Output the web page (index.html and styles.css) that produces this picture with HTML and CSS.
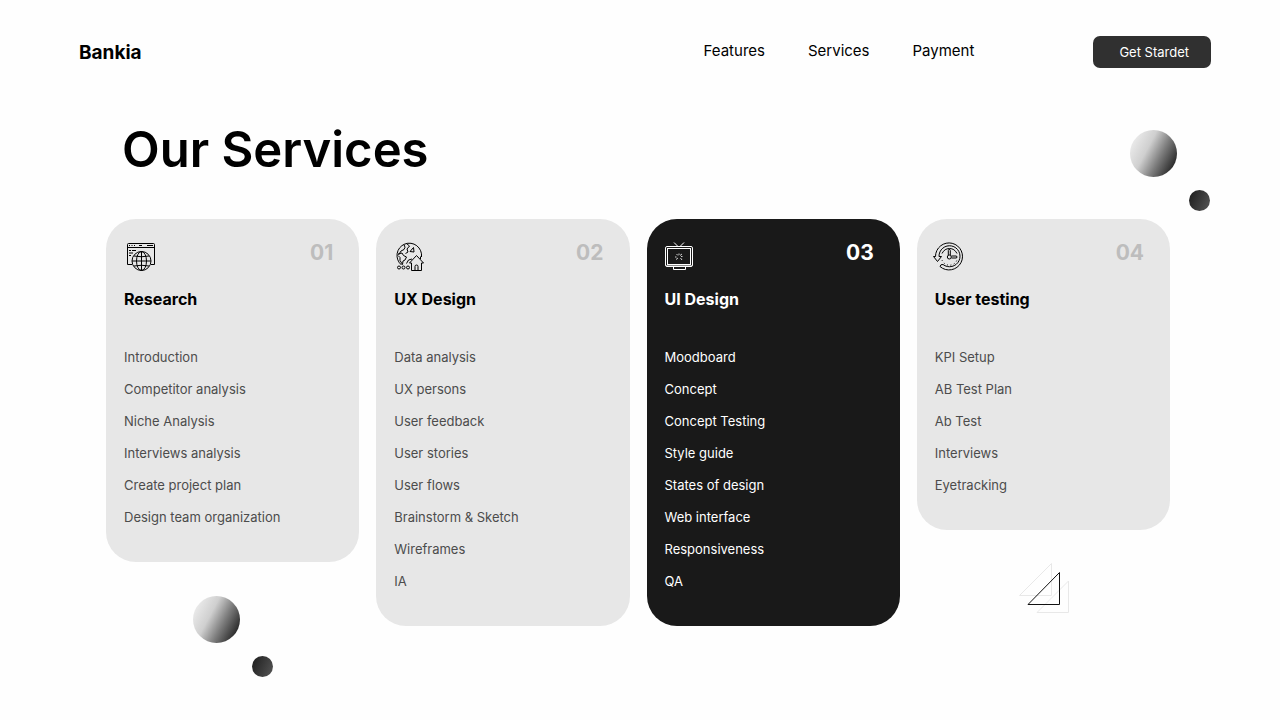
FILE: index.html
```html
<!DOCTYPE html>
<html lang="en">
<head>
<meta charset="utf-8">
<meta name="viewport" content="width=device-width, initial-scale=1">
<title>Bankia – Our Services</title>
<link rel="stylesheet" href="styles.css">
</head>
<body>
<header class="header">
  <a class="logo" href="#">Bankia</a>
  <nav class="nav">
    <a href="#">Features</a>
    <a href="#">Services</a>
    <a href="#">Payment</a>
  </nav>
  <button class="cta" type="button">Get Stardet</button>
</header>
<main class="main">
  <h1 class="title">Our Services</h1>
  <div class="cards">
    <section class="card">
      <div class="card-top">
        <svg class="icon" viewBox="0 0 34 32" aria-hidden="true">
          <path d="M8 23.500H3.500V3.500q0-1 1-1h25q1 0 1 1V23.500H27M3.500 6.500h27"/>
          <path d="M5 4.500h1M7.500 4.500h1M10 4.500h1M15 4.500h3M23 4.500h6M5 9.500h2M8 9.500h4M5 12h4M5 14.500h2"/>
          <circle cx="17.500" cy="20" r="9.500"/>
          <ellipse cx="17.500" cy="20" rx="5" ry="9.500"/>
          <path d="M17.500 10.500v19M8 20h19M10 15q7.500 1.500 15 0M10 25q7.500-1.500 15 0"/>
        </svg>
        <span class="num">01</span>
      </div>
      <h2 class="name">Research</h2>
      <ul class="list"><li>Introduction</li><li>Competitor analysis</li><li>Niche Analysis</li><li>Interviews analysis</li><li>Create project plan</li><li>Design team organization</li></ul>
    </section>
    <section class="card">
      <div class="card-top">
        <svg class="icon" viewBox="0 0 34 32" aria-hidden="true">
          <path d="M7.500 24A12.300 12.300 0 1 1 27.500 16"/>
          <path d="M10 3.500q2 3 0 5l-3 1.500-2.500 4M12.500 2.500l3 2.500-2.500 3 1 3-2.500 1.500M4 13l4-1 1.500 2.500 3 1.500-1.500 3-2 1-.500 3.500-2.500-4v-3l-2-2M16 10.500l3.500-4 .500 4.500z"/>
          <path d="M12.500 22.500l2-3.500 3.500-1"/>
          <circle cx="5" cy="26.500" r="1.500"/><circle cx="9.500" cy="26.500" r="1.500"/><circle cx="14" cy="26.500" r="1.500"/>
          <path class="house" d="M15.500 22l7-7.500 7 7.500h-2v7.500h-10V22z"/>
          <path d="M21 29.500v-4q0-1.500 1.500-1.500t1.500 1.500v4M26.500 18v-2.500"/>
        </svg>
        <span class="num">02</span>
      </div>
      <h2 class="name">UX Design</h2>
      <ul class="list"><li>Data analysis</li><li>UX persons</li><li>User feedback</li><li>User stories</li><li>User flows</li><li>Brainstorm &amp; Sketch</li><li>Wireframes</li><li>IA</li></ul>
    </section>
    <section class="card card-dark">
      <div class="card-top">
        <svg class="icon" viewBox="0 0 34 32" aria-hidden="true">
          <rect x="0.500" y="5.500" width="27" height="20" rx="1.500"/>
          <rect x="2.500" y="7.500" width="23" height="16"/>
          <path d="M9 1.500l4 4M19 1.500l-4 4M8.500 26v2.500h12V26"/>
          <path d="M1 24.500h26" opacity=".5"/>
          <path d="M11.500 13l1.500 1.500M14 12.500v1.500M17 13l-2 1.500M11 18.500l2-1.500M17 19l-1.500-2M10 16h1.500M16 15.500h1.500" opacity=".8"/>
        </svg>
        <span class="num">03</span>
      </div>
      <h2 class="name">UI Design</h2>
      <ul class="list"><li>Moodboard</li><li>Concept</li><li>Concept Testing</li><li>Style guide</li><li>States of design</li><li>Web interface</li><li>Responsiveness</li><li>QA</li></ul>
    </section>
    <section class="card">
      <div class="card-top">
        <svg class="icon" viewBox="0 0 34 32" aria-hidden="true">
          <path d="M.500 15.500A13.500 13.500 0 1 1 5 25.500q.500-2.500 3-2a10.500 10.500 0 1 0-4-8h2.500l-4 5-4-5z"/>
          <path d="M7 19a8 8 0 0 0 15 0" stroke-dasharray="1 2.500"/>
          <path d="M7 12.500q2.500-5 7.500-5t7.500 5"/>
          <circle cx="14.300" cy="16" r="2"/>
          <path d="M13.300 14V9.500l1-1.500 1 1.500V14M16.500 15h5q1 1 0 2h-5"/>
        </svg>
        <span class="num">04</span>
      </div>
      <h2 class="name">User testing</h2>
      <ul class="list"><li>KPI Setup</li><li>AB Test Plan</li><li>Ab Test</li><li>Interviews</li><li>Eyetracking</li></ul>
    </section>
  </div>
</main>
<div class="orbs orbs-top"></div>
<div class="orbs orbs-bottom"></div>
<svg class="triangles" viewBox="0 0 50 50" aria-hidden="true">
  <path class="faint" d="M32.500.500v32H.500zM49.500 18v31.500H18z"/>
  <path class="solid" d="M40.500 9.500v32H9z"/>
</svg>
</body>
</html>
```

FILE: styles.css
```css
* { box-sizing: border-box; }
body {
  position: relative;
  min-height: 100vh;
  margin: 0;
  background: #fefefe;
  color: #000;
  font-family: Inter, "Liberation Sans", sans-serif;
}
a { color: inherit; text-decoration: none; }
.header {
  display: flex;
  align-items: center;
  padding: 36px 69px 0 79px;
}
.logo { margin-right: auto; font-size: 19px; font-weight: 700; }
.nav {
  display: flex;
  gap: 43px;
  margin-right: 119px;
  font-size: 15px;
  line-height: 18px;
  padding-bottom: 2px;
}
.cta {
  height: 32px;
  padding: 0 22px 0 26px;
  border: 0;
  border-radius: 7px;
  background: #303030;
  color: #fff;
  font: 13px Inter, "Liberation Sans", sans-serif;
}
.main { padding: 50px 110px 60px 106px; }
.title {
  margin: 0 0 37px 16px;
  font-size: 49px;
  line-height: 64px;
  font-weight: 600;
}
.cards {
  display: grid;
  grid-template-columns: repeat(4, 1fr);
  gap: 17px;
  align-items: start;
}
.card {
  padding: 22px 18px 29px;
  border-radius: 30px;
  background: #e7e7e7;
}
.card-dark { background: #191919; color: #fff; }
.card-top { display: flex; justify-content: space-between; }
.icon {
  width: 34px;
  height: 32px;
  overflow: visible;
  fill: none;
  stroke: currentColor;
  stroke-width: 1;
}
.house { fill: #e7e7e7; }
.num {
  margin-right: 8px;
  color: #bdbdbd;
  font-size: 21px;
  line-height: 24px;
  font-weight: 700;
}
.card-dark .num { color: #fff; }
.name { margin: 16px 0 32px; font-size: 16px; line-height: 20px; font-weight: 700; }
.list {
  margin: 0;
  padding: 0;
  color: #4c4c4c;
  font-size: 13px;
  line-height: 32px;
  list-style: none;
}
.card-dark .list { color: #fff; }
.orbs { position: absolute; width: 80px; height: 81px; }
.orbs::before, .orbs::after { content: ""; position: absolute; border-radius: 50%; }
.orbs::before {
  top: 0;
  left: 0;
  width: 47px;
  height: 47px;
  background: linear-gradient(118deg, #ececec 10%, #cfcfcf 38%, #7c7c7c 62%, #1c1c1c 92%);
}
.orbs::after {
  right: 0;
  bottom: 0;
  width: 21px;
  height: 21px;
  background: linear-gradient(113deg, #1c1c1c, #565656);
}
.orbs-top { top: 130px; right: 70px; }
.orbs-bottom { top: 596px; left: 193px; }
.triangles { position: absolute; top: 563px; right: 211px; width: 50px; height: 50px; fill: none; }
.faint { stroke: #e8e8e8; }
.solid { stroke: #111; }
```
